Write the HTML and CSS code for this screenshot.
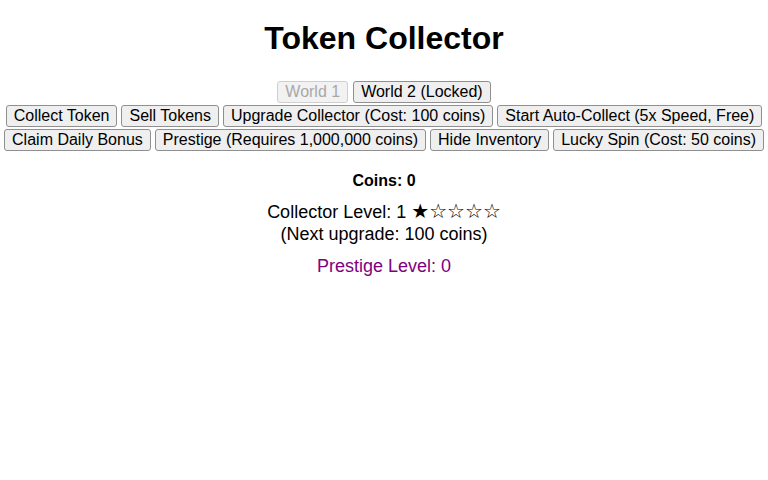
FILE: index.html
```html
<!DOCTYPE html>
<html lang="en">
<head>
  <meta charset="UTF-8" />
  <meta name="viewport" content="width=device-width, initial-scale=1.0"/>
  <title>Token Collector</title>
  <link rel="stylesheet" href="styles.css">
</head>
<body>
  <h1>Token Collector</h1>

  <div class="world-select">
    <button disabled>World 1</button>
    <button>World 2 (Locked)</button>
  </div>

  <div class="actions">
    <button>Collect Token</button>
    <button>Sell Tokens</button>
    <button>Upgrade Collector (Cost: 100 coins)</button>
    <button>Start Auto-Collect (5x Speed, Free)</button>
  </div>
  <div class="actions">
    <button>Claim Daily Bonus</button>
    <button>Prestige (Requires 1,000,000 coins)</button>
    <button>Hide Inventory</button>
    <button>Lucky Spin (Cost: 50 coins)</button>
  </div>

  <p class="coins">Coins: <span id="coins">0</span></p>

  <div class="level">
    Collector Level: 1 <span class="stars">★☆☆☆☆</span><br>
    (Next upgrade: 100 coins)
  </div>

  <div class="prestige">Prestige Level: 0</div>
</body>
</html>
```

FILE: styles.css
```css
body {
  font-family: 'Liberation Sans', Arial, sans-serif;
  text-align: center;
  margin: 0;
  padding: 0 8px;
  color: #000;
  background: #fff;
}

h1 {
  font-size: 32px;
  margin: 20px 0 24px;
}

.world-select,
.actions {
  display: flex;
  justify-content: center;
  gap: 4px;
  margin-bottom: 2px;
}

.world-select {
  gap: 5px;
}

button {
  font-family: 'Liberation Sans', Arial, sans-serif;
  font-size: 16px;
  padding: 1px 7px;
  background: #efefef;
  border: 1px solid #8f8f8f;
  border-radius: 3px;
  color: #000;
  white-space: nowrap;
  flex-shrink: 0;
}

button:disabled {
  color: #a8a8a8;
  border-color: #cfcfcf;
  background: #f2f2f2;
}

.coins {
  font-weight: bold;
  margin: 21px 0 11px;
}

.level {
  font-size: 18px;
  line-height: 22px;
}

.stars {
  font-family: 'DejaVu Sans', sans-serif;
  font-size: 20px;
  line-height: 1;
}

.prestige {
  font-size: 18px;
  color: purple;
  margin-top: 11px;
}
```
